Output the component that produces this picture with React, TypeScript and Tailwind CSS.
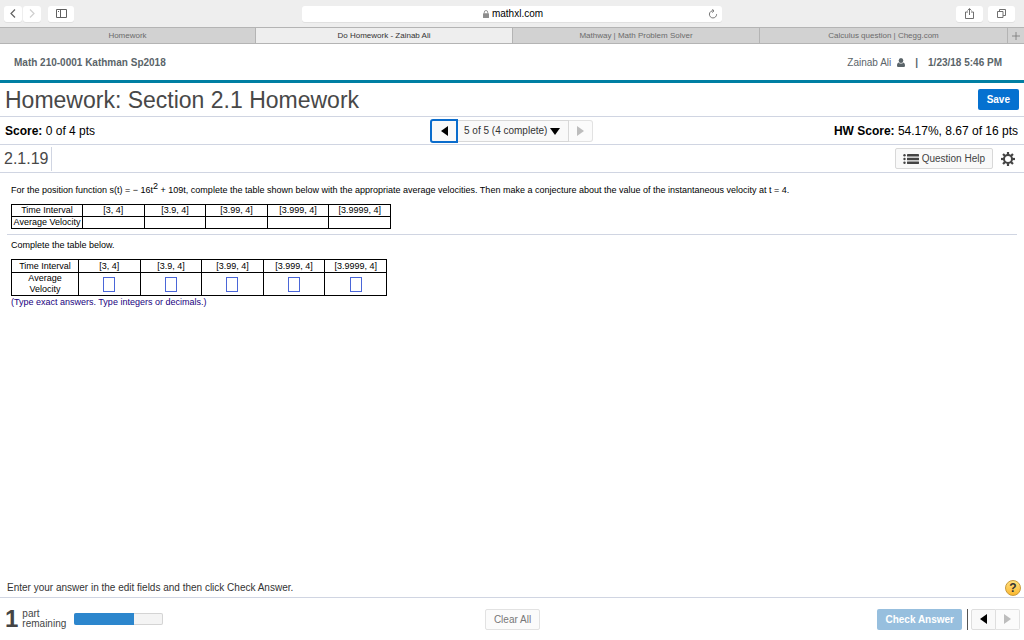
import { useState } from "react";

const tabs = [
  { label: "Homework", active: false },
  { label: "Do Homework - Zainab Ali", active: true },
  { label: "Mathway | Math Problem Solver", active: false },
  { label: "Calculus question | Chegg.com", active: false },
];

const intervals = ["[3, 4]", "[3.9, 4]", "[3.99, 4]", "[3.999, 4]", "[3.9999, 4]"];

const toolbarButton = "flex h-4 items-center justify-center rounded-[3px] bg-white text-[#606060] shadow-[0_1px_0_rgba(0,0,0,0.06)]";

function Triangle({ dir, className }: { dir: "left" | "right" | "down"; className?: string }) {
  const points = { left: "7,0 7,10 0,5", right: "0,0 7,5 0,10", down: "0,0 10,0 5,7" }[dir];
  const [w, h] = dir === "down" ? [10, 7] : [7, 10];
  return (
    <svg width={w} height={h} viewBox={`0 0 ${w} ${h}`} className={className} fill="currentColor" aria-hidden>
      <polygon points={points} />
    </svg>
  );
}

function UserIcon() {
  return (
    <svg width="8" height="9" viewBox="0 0 8 9" fill="currentColor" className="ml-[6px]" aria-hidden>
      <ellipse cx="4" cy="2.5" rx="2.3" ry="2.5" />
      <path d="M1.7 4.4C.6 4.8 0 5.8 0 7.4 0 8.4.6 9 1.5 9h5C7.4 9 8 8.4 8 7.4 8 5.8 7.4 4.8 6.3 4.4 5.7 5.2 4.9 5.6 4 5.6S2.3 5.2 1.7 4.4Z" />
    </svg>
  );
}

function GearIcon() {
  return (
    <svg width="14" height="14" viewBox="0 0 14 14" aria-hidden>
      <circle cx="7" cy="7" r="4" fill="none" stroke="currentColor" strokeWidth="2" />
      {[0, 45, 90, 135, 180, 225, 270, 315].map((a) => (
        <rect key={a} x="5.9" y="0" width="2.2" height="2.8" fill="currentColor" transform={`rotate(${a} 7 7)`} />
      ))}
    </svg>
  );
}

function ListIcon() {
  return (
    <svg width="16" height="10" viewBox="0 0 16 10" fill="currentColor" aria-hidden>
      {[0, 3.7, 7.4].map((y) => (
        <g key={y}>
          <circle cx="1.5" cy={y + 1.3} r="1.2" />
          <rect x="4" y={y} width="12" height="2.6" rx="0.4" />
        </g>
      ))}
    </svg>
  );
}

function BrowserBar() {
  return (
    <div className="border-b border-[#b4b4b4] bg-[#eeeeee]">
      <div className="grid h-[27px] grid-cols-[1fr_41%_1fr] items-center">
        <div className="flex pl-1">
          <button type="button" aria-label="Back" className={`${toolbarButton} w-[18px]`}>
            <svg width="6" height="9" viewBox="0 0 6 9" fill="none" stroke="currentColor" strokeWidth="1.2" aria-hidden>
              <path d="M5 .5 1 4.5l4 4" />
            </svg>
          </button>
          <button type="button" aria-label="Forward" className={`${toolbarButton} ml-px w-[18px]`} disabled>
            <svg width="6" height="9" viewBox="0 0 6 9" fill="none" stroke="#cfcfcf" strokeWidth="1.2" aria-hidden>
              <path d="m1 .5 4 4-4 4" />
            </svg>
          </button>
          <button type="button" aria-label="Sidebar" className={`${toolbarButton} ml-[7px] w-[26px]`}>
            <svg width="11" height="9" viewBox="0 0 11 9" fill="none" stroke="currentColor" aria-hidden>
              <path d="M.5.5h10v8H.5zM4.5.5v8M2 2.5h1" />
            </svg>
          </button>
        </div>
        <div className="flex h-4 items-center rounded-[3px] bg-white px-1 shadow-[0_1px_0_rgba(0,0,0,0.06)]">
          <div className="flex flex-1 items-center justify-center gap-[3px] pl-3 text-[10px] leading-4 text-black">
            <svg width="6" height="8" viewBox="0 0 6 8" aria-hidden>
              <rect y="3.3" width="6" height="4.7" rx="0.5" fill="#8d8d8d" />
              <path d="M1.3 3.5V2.2a1.7 1.7 0 0 1 3.4 0v1.3" fill="none" stroke="#8d8d8d" strokeWidth="0.9" />
            </svg>
            mathxl.com
          </div>
          <button type="button" aria-label="Reload" className="text-[#666]">
            <svg width="10" height="10" viewBox="0 0 10 10" fill="none" stroke="currentColor" strokeWidth="0.9" aria-hidden>
              <path d="M5.6 1.8A3.6 3.6 0 1 0 8.6 5.2M4.2 0 6 1.8 4.2 3.6" />
            </svg>
          </button>
        </div>
        <div className="flex justify-end gap-[5px] pr-[9px]">
          <button type="button" aria-label="Share" className={`${toolbarButton} w-[27px]`}>
            <svg width="9" height="11" viewBox="0 0 9 11" fill="none" stroke="currentColor" strokeWidth="0.9" aria-hidden>
              <path d="M3 4H.5v6.5h8V4H6M4.5 7V.7M2.6 2.5 4.5.6l1.9 1.9" />
            </svg>
          </button>
          <button type="button" aria-label="Show tabs" className={`${toolbarButton} w-[27px]`}>
            <svg width="9" height="9" viewBox="0 0 9 9" fill="none" stroke="currentColor" strokeWidth="0.9" aria-hidden>
              <path d="M.5 2.5h5.5v6H.5zM2.5 2.3V.5h6v6H6.2" />
            </svg>
          </button>
        </div>
      </div>
      <nav className="grid grid-cols-[256fr_257fr_247fr_248fr_16px] border-t border-[#b4b4b4] text-[8px] leading-[15px] text-[#6b6b6b]">
        {tabs.map((tab) => (
          <a
            key={tab.label}
            href="#"
            className={`truncate border-r border-[#b4b4b4] text-center ${tab.active ? "bg-[#eeeeee] text-[#333]" : "bg-[#d2d2d2]"}`}
          >
            {tab.label}
          </a>
        ))}
        <button type="button" aria-label="New tab" className="flex items-center justify-center bg-[#d2d2d2]">
          <svg width="8" height="8" viewBox="0 0 8 8" stroke="#777" aria-hidden>
            <path d="M0 4h8M4 0v8" strokeWidth="0.8" />
          </svg>
        </button>
      </nav>
    </div>
  );
}

function QuestionNav() {
  return (
    <div className="flex items-center">
      <button
        type="button"
        aria-label="Previous question"
        className="flex h-6 w-7 items-center justify-center rounded-l-[3px] border-2 border-[#0a6ccc] bg-[#f9f9f9] text-black"
      >
        <Triangle dir="left" />
      </button>
      <div className="relative h-[22px] w-[111px] border-y border-r border-[#d8d8d8] bg-[#f9f9f9]">
        <select
          aria-label="Question"
          className="h-full w-full appearance-none bg-transparent pl-[6px] text-[10px] leading-5 text-[#333]"
        >
          <option>5 of 5 (4 complete)</option>
        </select>
        <Triangle dir="down" className="pointer-events-none absolute top-[7px] right-2 text-black" />
      </div>
      <button
        type="button"
        aria-label="Next question"
        disabled
        className="flex h-[22px] w-6 items-center justify-center rounded-r-[3px] border-y border-r border-[#e2e2e2] bg-[#fbfbfb] text-[#bdbdbd]"
      >
        <Triangle dir="right" />
      </button>
    </div>
  );
}

function GivenTable() {
  return (
    <table className="mt-2 w-[380px] table-fixed border-collapse text-center leading-[11px]">
      <tbody>
        <tr>
          <th scope="row" className="w-[71px] border border-black font-normal">Time Interval</th>
          {intervals.map((t) => (
            <th key={t} scope="col" className="border border-black font-normal">{t}</th>
          ))}
        </tr>
        <tr>
          <th scope="row" className="border border-black font-normal whitespace-nowrap">Average Velocity</th>
          {intervals.map((t) => (
            <td key={t} className="border border-black" />
          ))}
        </tr>
      </tbody>
    </table>
  );
}

function AnswerTable() {
  const [answers, setAnswers] = useState(intervals.map(() => ""));

  return (
    <table className="mt-2 w-[376px] table-fixed border-collapse text-center leading-[11px]">
      <tbody>
        <tr className="h-[13px]">
          <th scope="row" className="w-[67px] border border-black font-normal">Time Interval</th>
          {intervals.map((t) => (
            <th key={t} scope="col" className="border border-black font-normal">{t}</th>
          ))}
        </tr>
        <tr>
          <th scope="row" className="border border-black px-3 font-normal">Average Velocity</th>
          {intervals.map((t, i) => (
            <td key={t} className="border border-black">
              <input
                aria-label={`Average velocity on ${t}`}
                value={answers[i]}
                onChange={(e) => setAnswers(answers.map((a, j) => (j === i ? e.target.value : a)))}
                className="mx-auto block h-[15px] w-3 border border-[#4a66d8] bg-white text-center"
              />
            </td>
          ))}
        </tr>
      </tbody>
    </table>
  );
}

export default function App() {
  return (
    <div className="flex min-h-screen flex-col bg-white font-['Liberation_Sans',Arial,sans-serif] text-black">
      <BrowserBar />

      <header className="flex h-9 items-center justify-between pr-[22px] pl-[14px] text-[10px] text-[#5a6469]">
        <span className="font-bold">Math 210-0001 Kathman Sp2018</span>
        <div className="flex items-center">
          <span>Zainab Ali</span>
          <UserIcon />
          <span className="mx-[10px] font-bold">|</span>
          <span className="font-bold">1/23/18 5:46 PM</span>
        </div>
      </header>

      <div className="flex h-[37px] items-center justify-between border-t-3 border-b border-t-[#007fa3] border-b-[#d0d5e2] pr-[5px] pl-[5px]">
        <h1 className="text-[23px] leading-8 text-[#484848]">Homework: Section 2.1 Homework</h1>
        <button type="button" className="h-[21px] rounded-[2px] bg-[#0571d0] px-[9px] text-[10px] font-bold text-white">
          Save
        </button>
      </div>

      <div className="grid h-7 grid-cols-[1fr_auto_1fr] items-center border-b border-[#d0d5e2] pr-[6px] pl-[5px] text-xs">
        <p>
          <b>Score:</b> 0 of 4 pts
        </p>
        <QuestionNav />
        <p className="text-right">
          <b>HW Score:</b> 54.17%, 8.67 of 16 pts
        </p>
      </div>

      <div className="flex h-7 items-center justify-between border-b border-[#d0d5e2] pr-[9px]">
        <h2 className="border-r border-[#d0d5e2] pr-[3px] pl-1 text-base text-[#484848]">2.1.19</h2>
        <div className="flex items-center gap-2 text-[#444]">
          <button type="button" className="flex h-[21px] items-center gap-[3px] rounded-[2px] border border-[#d8d8d8] bg-[#f9f9f9] px-[7px] text-[10px]">
            <ListIcon />
            Question Help
          </button>
          <button type="button" aria-label="Settings">
            <GearIcon />
          </button>
        </div>
      </div>

      <main className="flex-1 pr-[7px] pl-[7px] text-[9px] leading-3">
        <section className="border-b border-[#d0d5e2] pt-[11px] pb-[5px] pl-1">
          <p>
            For the position function s(t) = &minus; 16t<sup className="text-[9px] leading-none">2</sup> + 109t, complete the table shown below
            with the appropriate average velocities. Then make a conjecture about the value of the instantaneous velocity
            at t = 4.
          </p>
          <GivenTable />
        </section>
        <section className="pt-1 pl-1">
          <p>Complete the table below.</p>
          <AnswerTable />
          <p className="text-[#200080]">(Type exact answers. Type integers or decimals.)</p>
        </section>
      </main>

      <div className="flex h-5 items-center justify-between border-b border-[#d0d5e2] pr-[3px] pl-[7px] text-[10px] text-[#333]">
        <p>Enter your answer in the edit fields and then click Check Answer.</p>
        <button
          type="button"
          aria-label="Help"
          className="flex size-4 items-center justify-center rounded-full border border-[#c99a3a] bg-linear-to-b from-[#ffe07a] to-[#fbb82c] text-xs font-bold text-[#333]"
        >
          ?
        </button>
      </div>

      <footer className="grid h-[42px] grid-cols-[1fr_auto_1fr] items-center pr-1 pl-[5px]">
        <div className="flex items-center text-[#444]">
          <span className="text-2xl font-bold">1</span>
          <span className="ml-1 text-[10px] leading-[10px]">
            part
            <br />
            remaining
          </span>
          <div
            role="progressbar"
            aria-label="Parts completed"
            aria-valuenow={2}
            aria-valuemax={3}
            className="ml-2 h-3 w-[89px] overflow-hidden rounded-[2px] bg-[#f4f4f4] inset-ring inset-ring-[#d4d4d4]"
          >
            <div className="h-full w-2/3 bg-[#2c86cd]" />
          </div>
        </div>
        <button type="button" className="h-[21px] rounded-[2px] border border-[#e2e2e2] bg-[#fbfbfb] px-2 text-[10px] text-[#777]">
          Clear All
        </button>
        <div className="flex items-center justify-end">
          <button type="button" className="h-[21px] rounded-[2px] bg-[#97bfde] px-2 text-[10px] font-bold text-white">
            Check Answer
          </button>
          <div className="ml-[5px] h-[21px] border-l border-[#555]" />
          <button
            type="button"
            aria-label="Previous part"
            className="ml-[3px] flex h-[21px] w-[25px] items-center justify-center rounded-l-[2px] border border-[#dedede] bg-[#f9f9f9]"
          >
            <Triangle dir="left" />
          </button>
          <button
            type="button"
            aria-label="Next part"
            disabled
            className="flex h-[21px] w-6 items-center justify-center rounded-r-[2px] border-y border-r border-[#e2e2e2] bg-[#fbfbfb] text-[#bdbdbd]"
          >
            <Triangle dir="right" />
          </button>
        </div>
      </footer>
    </div>
  );
}
